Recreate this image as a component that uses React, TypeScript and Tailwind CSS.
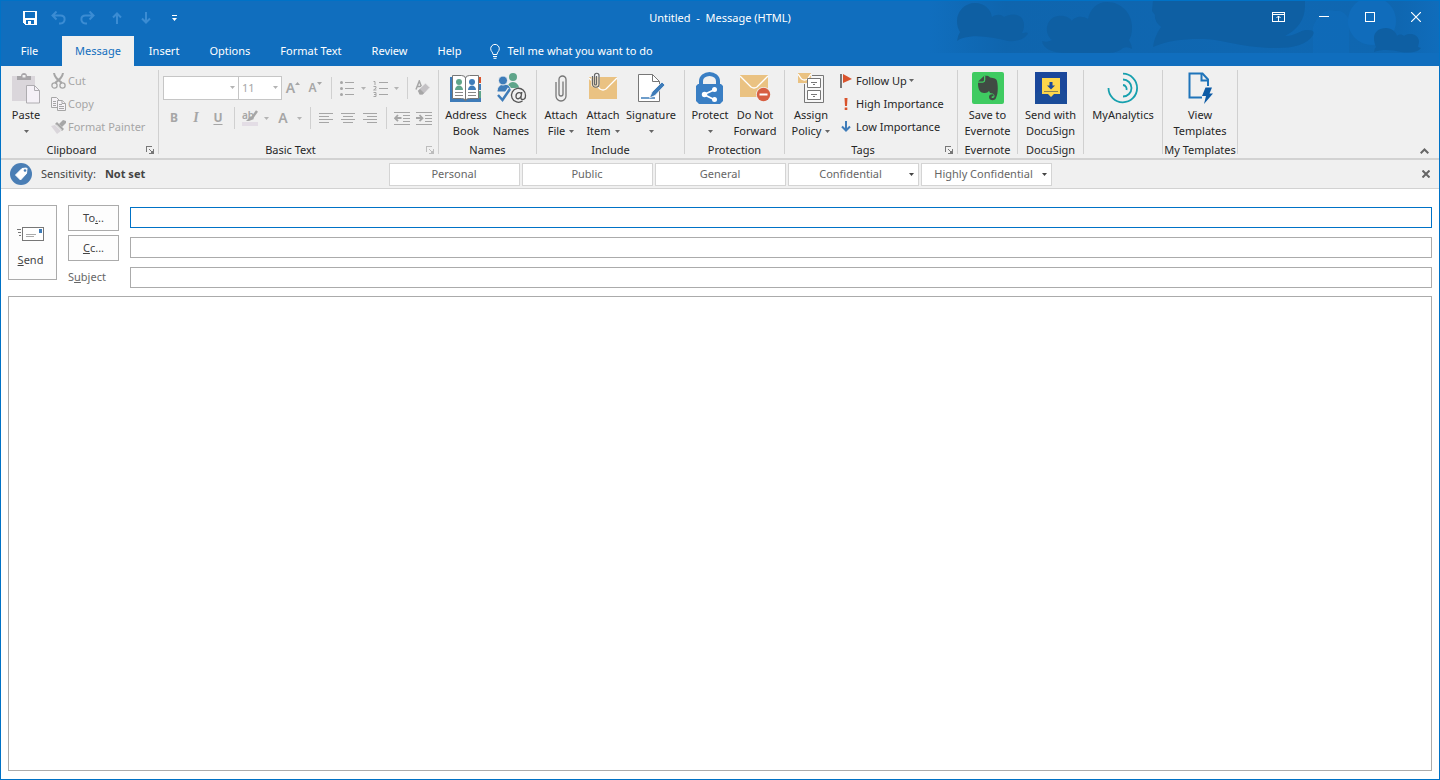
import type { ReactNode } from "react";

const tabs = ["Message", "Insert", "Options", "Format Text", "Review", "Help"];

function Caret({ className = "text-[#666666]" }: { className?: string }) {
  return (
    <svg width="5" height="3" viewBox="0 0 5 3" className={`shrink-0 ${className}`}>
      <path d="M0 0h5L2.5 3z" fill="currentColor" />
    </svg>
  );
}

function Launcher({ className = "text-[#777777]" }: { className?: string }) {
  return (
    <button aria-label="More options" className={className}>
      <svg width="8" height="8" viewBox="0 0 8 8" fill="none" stroke="currentColor" shapeRendering="crispEdges">
        <path d="M.5 6V.5H6" />
        <path d="M3 3l3 3" shapeRendering="auto" />
        <path d="M7.5 3v4.5H3" />
        <path d="M7 4v3H4z" fill="currentColor" stroke="none" />
      </svg>
    </button>
  );
}

function Group({ label, width, launcher, children }: { label?: string; width: string; launcher?: ReactNode; children: ReactNode }) {
  return (
    <section className={`flex shrink-0 flex-col border-r border-[#d0d0d0] ${width}`}>
      <div className="flex min-h-0 flex-1">{children}</div>
      <div className="-mb-1 flex h-4 shrink-0 items-center justify-center">
        <span className="flex-1 text-center whitespace-nowrap">{label}</span>
        {launcher && <span className="flex px-1">{launcher}</span>}
      </div>
    </section>
  );
}

function BigButton({ icon, lines, caret, width }: { icon: ReactNode; lines: string[]; caret?: boolean; width: string }) {
  return (
    <button className={`flex shrink-0 flex-col items-center pt-[2px] leading-4 whitespace-nowrap ${width}`}>
      <span className="mb-[3px] flex h-8 shrink-0 items-center justify-center">{icon}</span>
      <span>{lines[0]}</span>
      <span className="flex h-4 items-center gap-1">
        {lines[1]}
        {caret && <Caret />}
      </span>
    </button>
  );
}

function SmallButton({ icon, label, caret }: { icon: ReactNode; label: string; caret?: boolean }) {
  return (
    <button className="flex h-[23px] items-center gap-[2px] pb-[2px] whitespace-nowrap">
      <span className="flex w-4 justify-center">{icon}</span>
      {label}
      {caret && <Caret />}
    </button>
  );
}

function Tool({ label, children }: { label: string; children: ReactNode }) {
  return (
    <button aria-label={label} className="flex h-6 w-[22px] shrink-0 items-center justify-center">
      {children}
    </button>
  );
}

function ToolCaret() {
  return (
    <span className="flex w-[11px] shrink-0 justify-center">
      <Caret className="text-[#b4b4b4]" />
    </span>
  );
}

function ToolSeparator() {
  return (
    <span className="flex h-[22px] w-[10px] shrink-0 justify-center">
      <span className="w-px bg-[#d0d0d0]" />
    </span>
  );
}

function Lines({ rows }: { rows: [number, number, number][] }) {
  return (
    <svg width="16" height="12" viewBox="0 0 16 12" fill="#a6a6a6" shapeRendering="crispEdges">
      {rows.map(([x, y, w]) => (
        <rect key={y} x={x} y={y} width={w} height="1" />
      ))}
    </svg>
  );
}

function TitlePattern() {
  return (
    <svg className="pointer-events-none absolute top-0 right-0" width="510" height="52" viewBox="0 0 510 52">
      <defs>
        <linearGradient id="tint" x1="0" x2="1">
          <stop offset="0" stopColor="#0e5fa3" stopOpacity="0" />
          <stop offset=".15" stopColor="#0e5fa3" stopOpacity=".6" />
          <stop offset=".7" stopColor="#0e5fa3" stopOpacity=".45" />
          <stop offset=".92" stopColor="#0e5fa3" stopOpacity=".5" />
          <stop offset="1" stopColor="#0e5fa3" stopOpacity=".1" />
        </linearGradient>
      </defs>
      <rect width="510" height="52" fill="url(#tint)" />
      <path d="M384 52V26q8-20 22-16 8-2 14 8V52z" fill="#106ebe" opacity=".5" />
      <circle cx="443" cy="20" r="24" fill="#106ebe" opacity=".8" />
      <g fill="#0e5fa3">
        <path d="M28 20C28 10 36 2 46 2s16 7 17 14c4-3 9-3 12 0 8-5 20-3 20 8 0 4-1 6-2 8 3 0 4-1 6 0-2 6-12 9-20 8-14-3-30-7-45-3q-4 1-6 3 1-6 3-9c-2-3-3-7-3-11z" />
        <path d="M113 40q5 2 10-1c-8-6-7-22 6-24 7-1 12 2 14 5 2-4 10-6 16-2C161 8 168 1 178 1c14 0 25 11 25 25 0 6-1 10-3 13q3 5 3 9-5-3-9-1c-6 5-12 5-20 5h-38c-12 0-22-4-23-12z" />
        <path d="M224 0h152v5c0 14-8 24-20 30 12 0 14-6 22-6 5 0 8 1 6 5-6 10-20 13-36 13-40 0-50-9-78-9-18 0-32 2-46 8q1-10 8-20-7-6-6-12l-3-4z" />
        <path d="M445 37c0-6 5-10 12-10 6 0 10 4 11 8 2-2 5-2 7 0 5-4 15-2 15 6l-1 5 3 1c-4 5-12 5-20 4-9-2-18-3-27 0q0-3 2-5c-1-3-2-5-2-9z" />
      </g>
    </svg>
  );
}

function TitleBar() {
  return (
    <header className="relative bg-[#106ebe] text-white">
      <TitlePattern />
      <div className="relative grid h-[33px] grid-cols-[1fr_auto_1fr] items-center">
        <div className="flex pl-[14px]">
          <button aria-label="Save" className="flex w-[29px] justify-center">
            <svg width="14" height="14" viewBox="0 0 14 14" fill="#ffffff" shapeRendering="crispEdges">
              <path fillRule="evenodd" d="M0 0h14v14H2l-2-2zM2 1v6h10V1zM3 9v4h2v-3h3v3h3V9z" />
            </svg>
          </button>
          <button aria-label="Undo" className="flex w-[29px] justify-center">
            <svg width="15" height="14" viewBox="0 0 15 14" fill="none" stroke="#3b8cd3" strokeWidth="2">
              <path d="M5.5.5l-4 4 4 4M2 4.500h7.500c5.500 0 5.500 7 0 8H8" />
            </svg>
          </button>
          <button aria-label="Redo" className="flex w-[29px] justify-center">
            <svg width="15" height="14" viewBox="0 0 15 14" fill="none" stroke="#3b8cd3" strokeWidth="2">
              <path d="M9.500.5l4 4-4 4M13 4.500H5.500c-5.500 0-5.500 7 0 8H7" />
            </svg>
          </button>
          <button aria-label="Previous item" className="flex w-[29px] items-center justify-center">
            <svg width="10" height="12" viewBox="0 0 10 12" fill="none" stroke="#3b8cd3" strokeWidth="2">
              <path d="M5 12V1.500M1 5.500l4-4 4 4" />
            </svg>
          </button>
          <button aria-label="Next item" className="flex w-[29px] items-center justify-center">
            <svg width="10" height="12" viewBox="0 0 10 12" fill="none" stroke="#3b8cd3" strokeWidth="2">
              <path d="M5 0v10.500M1 6.500l4 4 4-4" />
            </svg>
          </button>
          <button aria-label="Customize toolbar" className="flex w-[29px] items-center justify-center">
            <svg width="5" height="6" viewBox="0 0 5 6" fill="#ffffff">
              <path d="M0 0h5v1H0zM0 3h5L2.500 6z" />
            </svg>
          </button>
        </div>
        <h1 className="whitespace-pre">Untitled  -  Message (HTML)</h1>
        <div className="flex justify-end pb-[2px]">
          <button aria-label="Ribbon display options" className="flex w-[46px] items-center justify-center">
            <svg width="13" height="10" viewBox="0 0 13 10" fill="none" stroke="#ffffff" shapeRendering="crispEdges">
              <path d="M.5.5h12v9H.5zM.5 2.500h12M6.500 4v5" />
              <path d="M4.500 6l2-2 2 2" shapeRendering="auto" />
            </svg>
          </button>
          <button aria-label="Minimize" className="flex w-[46px] items-center justify-center">
            <span className="h-px w-[10px] bg-white" />
          </button>
          <button aria-label="Maximize" className="flex w-[46px] items-center justify-center">
            <span className="size-[10px] border border-white" />
          </button>
          <button aria-label="Close" className="flex w-[46px] items-center justify-center">
            <svg width="10" height="10" viewBox="0 0 10 10" stroke="#ffffff" strokeWidth="1.2">
              <path d="M0 0l10 10M10 0L0 10" />
            </svg>
          </button>
        </div>
      </div>
      <nav className="relative mt-[2px] flex h-[30px]">
        <button className="w-[61px] pr-1">File</button>
        {tabs.map((tab) => (
          <button key={tab} className={tab === "Message" ? "bg-[#f0f0f0] px-[13px] text-[#106ebe]" : "px-[15px]"}>
            {tab}
          </button>
        ))}
        <button className="flex items-center gap-[7px] px-[14px]">
          <svg width="10" height="15" viewBox="0 0 10 15" fill="none" stroke="#ffffff">
            <path d="M3 10.500C3 8 .7 7.500.7 4.700a4.300 4.300 0 0 1 8.600 0C9.300 7.500 7 8 7 10.500zM3 12.500h4M3.500 14.300h3" />
          </svg>
          Tell me what you want to do
        </button>
      </nav>
    </header>
  );
}

function PasteIcon() {
  return (
    <svg width="30" height="31" viewBox="0 0 30 31">
      <path d="M1 3h23v25H1z" fill="#dad6db" />
      <path d="M6 7V3h4c0-4 6-4 6 0h4v4z" fill="#a7a5a8" />
      <rect x="11.5" y="2" width="3" height="2.5" fill="#f0f0f0" />
      <path d="M15.500 12.500h8l5 5v12.500h-13z" fill="#f5f1f7" stroke="#aeacb0" />
      <path d="M23.500 12.500v5h5" fill="none" stroke="#aeacb0" />
    </svg>
  );
}

function ClipboardGroup() {
  return (
    <Group label="Clipboard" width="w-[158px]" launcher={<Launcher />}>
      <BigButton icon={<PasteIcon />} lines={["Paste"]} caret width="w-[50px]" />
      <div className="-ml-px text-[#a6a6a6]">
        <SmallButton
          label="Cut"
          icon={
            <svg width="15" height="16" viewBox="0 0 15 16" fill="none" stroke="#a6a6a6">
              <path d="M3 0c.5 4 3 6 8 10M12 0c-.5 4-3 6-8 10" strokeWidth="2" />
              <circle cx="3.5" cy="12.5" r="2.6" strokeWidth="1.3" />
              <circle cx="11.5" cy="12.5" r="2.6" strokeWidth="1.3" />
            </svg>
          }
        />
        <SmallButton
          label="Copy"
          icon={
            <svg width="15" height="14" viewBox="0 0 15 14" fill="#f5f2f6" stroke="#a6a6a6">
              <path d="M.5.5h5l3 3v7h-8z" />
              <path d="M2 4.500h3M2 6.500h3M2 8.500h3" />
              <path d="M6.500 3.500h5l3 3v7h-8z" />
              <path d="M11 3.500v3h3.500M8 7.500h3M8 9.500h5M8 11.500h5" />
            </svg>
          }
        />
        <SmallButton
          label="Format Painter"
          icon={
            <svg width="15" height="14" viewBox="0 0 15 14">
              <path d="M0 6l4-1 6 6-4 3z" fill="#dad6db" />
              <path d="M4 4l2-2 7 7-2 2z" fill="#a6a6a6" />
              <path d="M8 4l4-4 3 1v2l-4 4z" fill="#a6a6a6" />
              <path d="M5 4.500l5.500 5.500" stroke="#f0f0f0" />
            </svg>
          }
        />
      </div>
    </Group>
  );
}

function BasicTextGroup() {
  return (
    <Group label="Basic Text" width="w-[280px]" launcher={<Launcher className="text-[#bdbdbd]" />}>
      <div className="flex flex-col gap-[6px] pt-[6px] pl-1 text-[#a6a6a6]">
        <div className="flex h-6 items-center">
          <div className="relative h-6 w-[76px]">
            <select aria-label="Font" className="h-full w-full appearance-none border border-[#c6c6c6] bg-white px-1">
              <option />
            </select>
            <Caret className="pointer-events-none absolute top-[10px] right-1 text-[#b4b4b4]" />
          </div>
          <div className="relative -ml-px h-6 w-11">
            <select aria-label="Font size" className="h-full w-full appearance-none border border-[#c6c6c6] bg-white px-[3px]">
              <option>11</option>
            </select>
            <Caret className="pointer-events-none absolute top-[10px] right-1 text-[#b4b4b4]" />
          </div>
          <Tool label="Increase font size">
            <span className="text-[14px] leading-4 font-semibold">A</span>
            <svg width="5" height="12" viewBox="0 0 5 12" fill="#a6a6a6"><path d="M0 3h5L2.500 0z" /></svg>
          </Tool>
          <Tool label="Decrease font size">
            <span className="text-[12px] leading-4 font-semibold">A</span>
            <svg width="5" height="12" viewBox="0 0 5 12" fill="#a6a6a6"><path d="M0 0h5L2.500 3z" /></svg>
          </Tool>
          <ToolSeparator />
          <Tool label="Bullets">
            <svg width="14" height="15" viewBox="0 0 14 15" fill="#a6a6a6">
              <path d="M5 1h9v1H5zM5 7h9v1H5zM5 13h9v1H5z" />
              <circle cx="1.5" cy="1.5" r="1.5" /><circle cx="1.5" cy="7.5" r="1.5" /><circle cx="1.5" cy="13.5" r="1.5" />
            </svg>
          </Tool>
          <ToolCaret />
          <Tool label="Numbering">
            <svg width="15" height="17" viewBox="0 0 15 17" fill="#a6a6a6">
              <path d="M6 2h9v1H6zM6 8h9v1H6zM6 14h9v1H6z" />
              <path d="M.5 1.500H2V5M.5 6.500H3v1.700L.6 10H3.500M.5 12.500H3v4H.5M1 14.500h2" fill="none" stroke="#a6a6a6" />
            </svg>
          </Tool>
          <ToolCaret />
          <ToolSeparator />
          <Tool label="Clear formatting">
            <svg width="16" height="16" viewBox="0 0 16 16">
              <path d="M1 9.500L4.300 1 7.500 9.500M2.300 6.500h4" fill="none" stroke="#a6a6a6" strokeWidth="1.5" />
              <path d="M2.500 10.500l8-7.500 4.500 4.500-7 7.500H4.500z" fill="#c3c1c4" stroke="#f0f0f0" />
              <path d="M3 11l2-2 4 4-1.500 1.500h-3z" fill="#a6a6a6" />
            </svg>
          </Tool>
        </div>
        <div className="flex h-6 items-center">
          <Tool label="Bold"><span className="text-[12px] font-bold">B</span></Tool>
          <Tool label="Italic"><span className="font-['Liberation_Serif',serif] text-[14px] font-bold italic">I</span></Tool>
          <Tool label="Underline"><span className="text-[12px] font-bold underline underline-offset-2">U</span></Tool>
          <ToolSeparator />
          <Tool label="Text highlight colour">
            <span className="relative flex h-4 w-4 items-start border-b-4 border-[#e3dde5] text-[10px] leading-[10px] font-semibold">
              ab
              <svg className="absolute top-0 left-1" width="12" height="12" viewBox="0 0 12 12">
                <path d="M11 1L6 8" stroke="#a6a6a6" strokeWidth="2.5" />
                <path d="M5 6l3 3-5 2H0z" fill="#a6a6a6" />
              </svg>
            </span>
          </Tool>
          <ToolCaret />
          <Tool label="Font colour"><span className="text-[14px] font-semibold">A</span></Tool>
          <ToolCaret />
          <ToolSeparator />
          <Tool label="Align left"><Lines rows={[[1, 1, 14], [1, 4, 10], [1, 7, 14], [1, 10, 10]]} /></Tool>
          <Tool label="Centre"><Lines rows={[[1, 1, 14], [3, 4, 10], [1, 7, 14], [3, 10, 10]]} /></Tool>
          <Tool label="Align right"><Lines rows={[[1, 1, 14], [5, 4, 10], [1, 7, 14], [5, 10, 10]]} /></Tool>
          <ToolSeparator />
          <Tool label="Decrease indent">
            <svg width="16" height="13" viewBox="0 0 16 13" fill="#a6a6a6">
              <path d="M0 0h16v1H0zM9 3h7v1H9zM9 6h7v1H9zM9 9h7v1H9zM0 12h16v1H0z" />
              <path d="M7.500 6H1M4 3L1 6.200l3 3" fill="none" stroke="#a6a6a6" strokeWidth="1.8" />
            </svg>
          </Tool>
          <Tool label="Increase indent">
            <svg width="16" height="13" viewBox="0 0 16 13" fill="#a6a6a6">
              <path d="M0 0h16v1H0zM9 3h7v1H9zM9 6h7v1H9zM9 9h7v1H9zM0 12h16v1H0z" />
              <path d="M0 6h6.500M3.500 3l3 3.200-3 3" fill="none" stroke="#a6a6a6" strokeWidth="1.8" />
            </svg>
          </Tool>
        </div>
      </div>
    </Group>
  );
}

function AddressBookIcon() {
  return (
    <svg width="32" height="28" viewBox="0 0 32 28">
      <path d="M0 3h31v25H0z" fill="#3e7cb9" />
      <path d="M28 3h3v6h-3z" fill="#d9532c" />
      <path d="M28 9h3v1h-3zM28 16h3v1h-3z" fill="#f0f0f0" />
      <path d="M28 17h3v7h-3z" fill="#5fa58a" />
      <path d="M2.500 1.500h9q4 0 4 3 0-3 4-3h9v23h-9q-4 0-4 2.500 0-2.500-4-2.500h-9z" fill="#fff" stroke="#777" />
      <path d="M15.500 4v23" stroke="#777" />
      <path d="M5 16c0-6 8-6 8 0z" fill="#5fa58a" /><circle cx="9" cy="8" r="3" fill="#5fa58a" />
      <path d="M18 16c0-6 8-6 8 0z" fill="#3e7cb9" /><circle cx="22" cy="8" r="3" fill="#3e7cb9" />
      <path d="M5 18.500h8M5 21.500h8M18 18.500h8M18 21.500h8" stroke="#888" />
    </svg>
  );
}

function CheckNamesIcon() {
  return (
    <svg width="31" height="32" viewBox="0 0 31 32">
      <circle cx="17" cy="5" r="4" fill="#5fa58a" />
      <path d="M11 16c0-3 3-6 6-6s6 3 6 6z" fill="#5fa58a" />
      <path d="M1 20c0-5 3-8 7-8 5 0 7 3 7 8z" fill="#3e7cb9" stroke="#f0f0f0" />
      <circle cx="7" cy="8.5" r="4.5" fill="#3e7cb9" stroke="#f0f0f0" />
      <path d="M2 23l4.500 5L14 17" stroke="#f0f0f0" strokeWidth="5" fill="none" />
      <path d="M2 23l4.500 5L14 17" stroke="#3e7cb9" strokeWidth="2.5" fill="none" />
      <circle cx="22.5" cy="23.5" r="8" fill="#f0f0f0" />
      <path d="M26.500 29a7 7 0 1 1 3-5.500c0 3-1.500 4-3 4-1.300 0-1.700-1-1.500-2l.8-5.500M25.300 22.500c0-3-5.300-2.500-5.300 1.700 0 4 4.500 3 5.200-.7" fill="none" stroke="#555" strokeWidth="1.3" />
    </svg>
  );
}

function EnvelopeBody({ y, w, h }: { y: number; w: number; h: number }) {
  return (
    <>
      <rect x="0" y={y} width={w} height={h} fill="#eac282" />
      <path d={`M0 ${y + 1}l${w / 2 - 3} ${h / 2}q3 2 6 0l${w / 2 - 3}-${h / 2}`} fill="none" stroke="#fff" strokeWidth="1.3" />
    </>
  );
}

function AttachFileIcon() {
  return (
    <svg width="12" height="28" viewBox="0 0 12 28" fill="none" stroke="#777" strokeWidth="1.3">
      <path d="M8 7.500v12.500a2 2 0 0 1-4 0V5.500a3.500 3.500 0 0 1 7 0V22a5 5 0 0 1-10 0V8" />
    </svg>
  );
}

function AttachItemIcon() {
  return (
    <svg width="29" height="32" viewBox="0 0 29 32">
      <EnvelopeBody y={5} w={28} h={22} />
      <path d="M2 5h9v9q-4 3-9 0z" fill="#f3e3c6" />
      <path d="M7.500 4v8a1 1 0 0 1-2 0V3.500a2 2 0 0 1 4.500 0V12a3.200 3.200 0 0 1-6.500 0V4" fill="none" stroke="#666" strokeWidth="1.2" />
    </svg>
  );
}

function SignatureIcon() {
  return (
    <svg width="28" height="30" viewBox="0 0 28 30">
      <path d="M1.500 1.500h14l7 7v20h-21z" fill="#fff" stroke="#777" />
      <path d="M15.500 1.500v7h7" fill="none" stroke="#777" />
      <path d="M4 25h14" stroke="#3e7cb9" strokeWidth="1.5" />
      <path d="M12.500 25l2.500-6L25 9l3 3-10 10.500z" fill="#3e7cb9" stroke="#f5f5f5" strokeWidth=".8" />
    </svg>
  );
}

function ProtectIcon() {
  return (
    <svg width="28" height="32" viewBox="0 0 28 32">
      <path d="M5 14V9a8.500 7 0 0 1 17 0v5" fill="none" stroke="#3a7fc4" strokeWidth="4" />
      <path d="M2 12h23l2 2v15l-3 3H3l-3-3V14z" fill="#3a7fc4" />
      <path d="M19 17.500L8 22.500l11 5.500" fill="none" stroke="#fff" strokeWidth="1.8" />
      <circle cx="18.5" cy="17.5" r="2.5" fill="#fff" /><circle cx="8.5" cy="22.5" r="2.7" fill="#fff" /><circle cx="18.5" cy="27.5" r="2.5" fill="#fff" />
    </svg>
  );
}

function DoNotForwardIcon() {
  return (
    <svg width="31" height="28" viewBox="0 0 31 28">
      <EnvelopeBody y={1} w={28} h={22} />
      <circle cx="23.5" cy="20.5" r="7.5" fill="#f0f0f0" />
      <circle cx="23.5" cy="20.5" r="6.7" fill="#d75f42" />
      <path d="M19.500 19.500h8v2h-8z" fill="#fff" />
    </svg>
  );
}

function PolicyIcon() {
  return (
    <svg width="27" height="30" viewBox="0 0 27 30">
      <path d="M6.500 2.500h19v27h-19z" fill="#f7f7f7" stroke="#777" />
      <path d="M0 0h14v11H0z" fill="#f0f0f0" />
      <EnvelopeBody y={0} w={13} h={10} />
      <path d="M9.500 5.500h13v9h-13zM9.500 17.500h13v9h-13z" fill="#fff" stroke="#777" />
      <path d="M13 9.500h6M13 21.500h6" stroke="#777" />
      <path d="M15 11h2v1h-2zM15 23h2v1h-2z" fill="#777" />
    </svg>
  );
}

function EvernoteIcon() {
  return (
    <svg width="32" height="32" viewBox="0 0 32 32">
      <rect width="32" height="32" rx="2" fill="#3fcb61" />
      <path
        d="M12 4v4c0 1-1 1.500-2 1.500H6L12 4c3-.7 5 0 6 1.500 4 .5 6.500 1 7 3.500 1.500 7 .8 14-1.500 18-1.500 2-6.500 1.500-6.500-2 0-2.500 2.500-3 4.500-2.500v1.700c-1.500-.2-2 .3-2 1 0 1.300 2.700 1 3-.7.3-2-1-3-3.500-3.200-1.500-.2-1.500-1.500-2-2.500-1 2-3.500 2.500-6 2C7 20 6 16 6 10.700h5q2.500-.7 2.300-3V4zM19.500 13q2.500-1.500 3 1.500-1.500-.8-3-.5z"
        fill="#404b43"
      />
    </svg>
  );
}

function DocuSignIcon() {
  return (
    <svg width="32" height="32" viewBox="0 0 32 32">
      <path d="M0 0h32v32H0z" fill="#1a479b" />
      <path d="M0 32V22l8-6 9 7 8-8 7 7v10z" fill="#1c5098" opacity=".6" />
      <path d="M7 6h18v16h-6l-3 3-3-3H7z" fill="#fdd64b" />
      <path d="M14.500 10h3v3.500H20L16 17.500l-4-4h2.500z" fill="#1a479b" />
      <path d="M9 19h14v1H9z" fill="#8b8454" />
    </svg>
  );
}

function AnalyticsIcon() {
  return (
    <svg width="32" height="32" viewBox="0 0 32 32" fill="none" stroke="#17a0ae" strokeWidth="1.8">
      <path d="M1.500 16A14.300 14.300 0 1 0 16 1.700" />
      <path d="M16 7.500a8.500 8.500 0 0 1 0 17" />
      <path d="M16 13a4 4 0 0 1 3.500 5" />
    </svg>
  );
}

function TemplatesIcon() {
  return (
    <svg width="25" height="32" viewBox="0 0 25 32">
      <path d="M14 25.500H1.500v-24h13l5.500 6V14" fill="none" stroke="#1f74ba" strokeWidth="2" />
      <path d="M13.500 2v6.500H20" fill="none" stroke="#1f74ba" strokeWidth="2" />
      <path d="M17.500 15.500h6.500l-2.500 6H25L16 32l2-8h-4z" fill="#0d5ba5" />
    </svg>
  );
}

function Ribbon() {
  return (
    <div className="flex h-[94px] overflow-hidden border-b-2 border-[#d2d2d2] bg-[#f0f0f0] py-1 text-[#262626]">
      <ClipboardGroup />
      <BasicTextGroup />
      <Group label="Names" width="w-[98px]">
        <BigButton icon={<AddressBookIcon />} lines={["Address", "Book"]} width="ml-[3px] w-12" />
        <BigButton icon={<CheckNamesIcon />} lines={["Check", "Names"]} width="w-[42px]" />
      </Group>
      <Group label="Include" width="w-[148px]">
        <BigButton icon={<AttachFileIcon />} lines={["Attach", "File"]} caret width="ml-[3px] w-[42px]" />
        <BigButton icon={<AttachItemIcon />} lines={["Attach", "Item"]} caret width="w-[42px]" />
        <BigButton icon={<SignatureIcon />} lines={["Signature"]} caret width="w-[54px]" />
      </Group>
      <Group label="Protection" width="w-[100px]">
        <BigButton icon={<ProtectIcon />} lines={["Protect"]} caret width="ml-[3px] w-11" />
        <BigButton icon={<DoNotForwardIcon />} lines={["Do Not", "Forward"]} width="w-[46px]" />
      </Group>
      <Group label="Tags" width="w-[173px]" launcher={<Launcher />}>
        <BigButton icon={<PolicyIcon />} lines={["Assign", "Policy"]} caret width="ml-[3px] w-[46px]" />
        <div className="pl-1">
          <SmallButton
            label="Follow Up"
            caret
            icon={
              <svg width="12" height="14" viewBox="0 0 12 14">
                <path d="M0 0h2v14H0z" fill="#777" /><path d="M3 0l9 5-9 4z" fill="#d9532c" />
              </svg>
            }
          />
          <SmallButton
            label="High Importance"
            icon={
              <svg width="4" height="12" viewBox="0 0 4 12" fill="#d9532c"><path d="M.5 0h3L3 8H1zM.7 9.500h2.600V12H.7z" /></svg>
            }
          />
          <SmallButton
            label="Low Importance"
            icon={
              <svg width="10" height="11" viewBox="0 0 10 11" fill="none" stroke="#3e7cb9" strokeWidth="2">
                <path d="M5 0v9.500M1 5.500l4 4 4-4" />
              </svg>
            }
          />
        </div>
      </Group>
      <Group label="Evernote" width="w-[60px]">
        <BigButton icon={<EvernoteIcon />} lines={["Save to", "Evernote"]} width="w-full" />
      </Group>
      <Group label="DocuSign" width="w-[66px]">
        <BigButton icon={<DocuSignIcon />} lines={["Send with", "DocuSign"]} width="w-full" />
      </Group>
      <Group width="w-[79px]">
        <BigButton icon={<AnalyticsIcon />} lines={["MyAnalytics"]} width="w-full" />
      </Group>
      <Group label="My Templates" width="w-[75px]">
        <BigButton icon={<TemplatesIcon />} lines={["View", "Templates"]} width="w-full" />
      </Group>
      <button aria-label="Collapse the ribbon" className="mr-[10px] ml-auto self-end">
        <svg width="9" height="6" viewBox="0 0 9 6" fill="none" stroke="#666" strokeWidth="2">
          <path d="M.7 5.300l3.800-3.800 3.800 3.800" />
        </svg>
      </button>
    </div>
  );
}

const labels = [
  { name: "Personal" },
  { name: "Public" },
  { name: "General" },
  { name: "Confidential", menu: true },
  { name: "Highly Confidential", menu: true },
];

function SensitivityBar() {
  return (
    <div className="grid h-[29px] grid-cols-[1fr_auto_1fr] items-center border-b border-[#d2d2d2] bg-[#f0f0f0] text-[#444444]">
      <div className="flex items-center gap-[9px] pl-[9px]">
        <svg width="22" height="22" viewBox="0 0 22 22">
          <circle cx="11" cy="11" r="11" fill="#4a7eb5" />
          <path d="M12 5.500l4.500-.5.500.5-.5 5-6 6.500-5-5z" fill="#fff" stroke="#fff" strokeLinejoin="round" />
          <circle cx="15" cy="7.5" r="1.3" fill="#4a7eb5" />
        </svg>
        <span>Sensitivity:</span>
        <strong>Not set</strong>
      </div>
      <div className="flex gap-[2px]">
        {labels.map(({ name, menu }) => (
          <button key={name} className="flex h-[23px] w-[131px] items-center border border-[#d4d4d4] bg-white px-1 text-[#666666]">
            <span className="flex-1 text-center whitespace-nowrap">{name}</span>
            {menu && <Caret className="text-[#444444]" />}
          </button>
        ))}
      </div>
      <button aria-label="Dismiss" className="mr-[9px] justify-self-end">
        <svg width="8" height="8" viewBox="0 0 8 8" stroke="#666" strokeWidth="2">
          <path d="M.5.5l7 7M7.500.5l-7 7" />
        </svg>
      </button>
    </div>
  );
}

export default function App() {
  return (
    <div className="flex min-h-screen flex-col border border-[#0072c6] bg-white font-['Noto_Sans','Open_Sans',sans-serif] text-[11px] leading-4">
      <TitleBar />
      <Ribbon />
      <SensitivityBar />
      <main className="flex flex-1 flex-col gap-[5px] px-[7px] pt-4 pb-2">
        <form className="flex items-start text-[#444444]">
          <button type="button" className="flex h-[75px] w-[49px] flex-col items-center justify-center gap-[10px] border border-[#ababab] bg-[#fdfdfd] pt-[10px] pr-1">
            <svg width="27" height="15" viewBox="0 0 27 15" fill="none" shapeRendering="crispEdges">
              <path d="M5.500.5h21v13h-21z" fill="#fff" stroke="#777" />
              <path d="M22 2h3v4h-3z" fill="#3e7cb9" />
              <path d="M9 7.500h10M9 9.500h8" stroke="#aaa" />
              <path d="M0 2.500h4M1 5.500h3M2 8.500h2" stroke="#777" />
            </svg>
            <span><span className="underline">S</span>end</span>
          </button>
          <div className="ml-[11px] grid flex-1 grid-cols-[51px_1fr] grid-rows-[26px_26px_26px] items-start gap-x-[11px] gap-y-1">
            <button type="button" className="h-[26px] border border-[#ababab] bg-[#fdfdfd]">
              To<span className="underline">.</span>..
            </button>
            <input aria-label="To" className="mt-[2px] h-[21px] border border-[#0072c6] px-1 outline-none" />
            <button type="button" className="h-[26px] border border-[#ababab] bg-[#fdfdfd]">
              <span className="underline">C</span>c...
            </button>
            <input aria-label="Cc" className="mt-[2px] h-[21px] border border-[#ababab] px-1 outline-none" />
            <label htmlFor="subject" className="leading-6 text-[#666666]">
              S<span className="underline">u</span>bject
            </label>
            <input id="subject" className="mt-[2px] h-[21px] border border-[#ababab] px-1 outline-none" />
          </div>
        </form>
        <textarea aria-label="Message body" className="flex-1 resize-none border border-[#ababab] p-2 outline-none" />
      </main>
    </div>
  );
}
